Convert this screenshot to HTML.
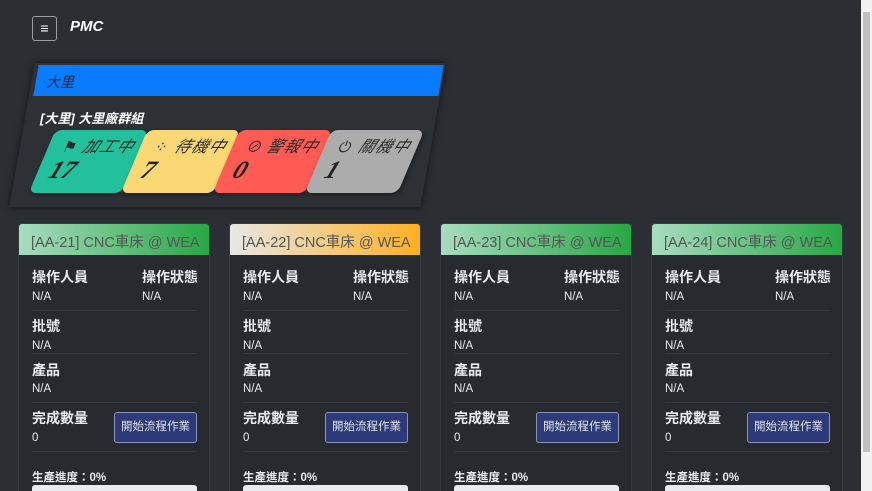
<!DOCTYPE html>
<html><head><meta charset="utf-8"><style>
*{box-sizing:border-box;margin:0;padding:0}
html,body{width:872px;height:491px;overflow:hidden}
body{background:#2b2f33;font-family:"Liberation Sans","Noto Sans CJK TC",sans-serif;color:#e9ecef;position:relative}
.abs{position:absolute}
.sb{position:absolute;right:0;top:0;width:11px;height:491px;background:#f1f1f1}
.sb:after{content:"";position:absolute;left:2px;top:12px;width:7px;height:440px;background:#c1c1c1}
.menu{left:32px;top:16px;width:25px;height:25px;border:1px solid #9a9da0;border-radius:3px;color:#fff;font-size:14px;text-align:center;line-height:22px}
.panel{left:22px;top:63px;width:411px;height:144px;background:#2d3135;transform:skewX(-10deg);box-shadow:0 0 8px rgba(0,0,0,.6)}
.ph{left:36px;top:65px;width:405px;height:31px;background:#0a7bff;transform:skewX(-10deg)}
.tile{top:130px;width:93px;height:63px;transform:skewX(-23deg);border-radius:7px;font-style:italic;box-shadow:2px 2px 4px rgba(0,0,0,.4);white-space:nowrap}
.tile .t{position:absolute;left:15px;top:3px;font-size:16px;color:#2a2a2a;letter-spacing:1px}
.tile .t i{display:inline-block;width:20px;font-style:normal;font-size:15px}
.tile .n{position:absolute;left:12px;top:27px;font:bold italic 25px "Liberation Serif",serif;color:#222}
.card{top:223px;width:192px;height:280px;background:#272b2f;border:1px solid #363a3e;border-radius:3px}
.ch{height:31px;padding:7px 12px;font-size:14.5px;color:#555;border-radius:3px 3px 0 0;white-space:nowrap}
.g{background:linear-gradient(90deg,#a8dcc0,#28a745)}
.y{background:linear-gradient(90deg,#e8e8e8,#ffb020)}
.cb{position:relative;height:250px}
.lb{position:absolute;font-size:14px;font-weight:bold;color:#e9ecef}
.v{position:absolute;font-size:11.5px;color:#e9ecef;white-space:nowrap}
.hr{position:absolute;left:13px;width:165px;height:1px;background:#34383c}
.btn{position:absolute;left:95px;top:157px;width:83px;height:31px;background:#2c3a7a;border:1px solid #8a93b8;border-radius:3px;font-size:11.5px;color:#e0e4f0;text-align:center;line-height:29px;white-space:nowrap}
.pb{position:absolute;left:13px;top:230px;width:165px;height:10px;background:#e9ecef;border-radius:3px}
</style></head><body>
<div class="abs menu">≡</div>
<div class="abs" style="left:70px;top:18px;font:bold italic 15px 'Liberation Sans',sans-serif;color:#fff">PMC</div>
<div class="abs panel"></div>
<div class="abs ph"></div>
<div class="abs" style="left:46px;top:72px;font-size:14px;font-style:italic;color:#1a2a40">大里</div>
<div class="abs" style="left:40px;top:108px;font-size:13px;font-weight:bold;font-style:italic;color:#fff">[大里] 大里廠群組</div>
<div class="abs tile" style="left:42px;background:#22c09c"><span class="t"><i>⚑</i>加工中</span><span class="n">17</span></div>
<div class="abs tile" style="left:134px;background:#fcd874"><span class="t"><i>⁘</i>待機中</span><span class="n">7</span></div>
<div class="abs tile" style="left:226px;background:#fd5b54"><span class="t"><i>⊘</i>警報中</span><span class="n">0</span></div>
<div class="abs tile" style="left:318px;background:#acacac"><span class="t"><i>⏻</i>關機中</span><span class="n">1</span></div>

<div class="abs card" style="left:18px"><div class="ch g">[AA-21] CNC車床 @ WEA</div><div class="cb">
<div class="lb" style="left:13px;top:12px">操作人員</div><div class="lb" style="left:123px;top:12px">操作狀態</div>
<div class="v" style="left:13px;top:36px">N/A</div><div class="v" style="left:123px;top:36px">N/A</div><div class="hr" style="top:55px"></div>
<div class="lb" style="left:13px;top:61px">批號</div><div class="v" style="left:13px;top:85px">N/A</div><div class="hr" style="top:98px"></div>
<div class="lb" style="left:13px;top:105px">產品</div><div class="v" style="left:13px;top:128px">N/A</div><div class="hr" style="top:147px"></div>
<div class="lb" style="left:13px;top:153px">完成數量</div><div class="v" style="left:13px;top:177px">0</div><div class="btn">開始流程作業</div><div class="hr" style="top:196px"></div>
<div class="v" style="left:13px;top:214px;font-weight:bold">生產進度：0%</div><div class="pb"></div></div></div>

<div class="abs card" style="left:229px"><div class="ch y">[AA-22] CNC車床 @ WEA</div><div class="cb">
<div class="lb" style="left:13px;top:12px">操作人員</div><div class="lb" style="left:123px;top:12px">操作狀態</div>
<div class="v" style="left:13px;top:36px">N/A</div><div class="v" style="left:123px;top:36px">N/A</div><div class="hr" style="top:55px"></div>
<div class="lb" style="left:13px;top:61px">批號</div><div class="v" style="left:13px;top:85px">N/A</div><div class="hr" style="top:98px"></div>
<div class="lb" style="left:13px;top:105px">產品</div><div class="v" style="left:13px;top:128px">N/A</div><div class="hr" style="top:147px"></div>
<div class="lb" style="left:13px;top:153px">完成數量</div><div class="v" style="left:13px;top:177px">0</div><div class="btn">開始流程作業</div><div class="hr" style="top:196px"></div>
<div class="v" style="left:13px;top:214px;font-weight:bold">生產進度：0%</div><div class="pb"></div></div></div>

<div class="abs card" style="left:440px"><div class="ch g">[AA-23] CNC車床 @ WEA</div><div class="cb">
<div class="lb" style="left:13px;top:12px">操作人員</div><div class="lb" style="left:123px;top:12px">操作狀態</div>
<div class="v" style="left:13px;top:36px">N/A</div><div class="v" style="left:123px;top:36px">N/A</div><div class="hr" style="top:55px"></div>
<div class="lb" style="left:13px;top:61px">批號</div><div class="v" style="left:13px;top:85px">N/A</div><div class="hr" style="top:98px"></div>
<div class="lb" style="left:13px;top:105px">產品</div><div class="v" style="left:13px;top:128px">N/A</div><div class="hr" style="top:147px"></div>
<div class="lb" style="left:13px;top:153px">完成數量</div><div class="v" style="left:13px;top:177px">0</div><div class="btn">開始流程作業</div><div class="hr" style="top:196px"></div>
<div class="v" style="left:13px;top:214px;font-weight:bold">生產進度：0%</div><div class="pb"></div></div></div>

<div class="abs card" style="left:651px"><div class="ch g">[AA-24] CNC車床 @ WEA</div><div class="cb">
<div class="lb" style="left:13px;top:12px">操作人員</div><div class="lb" style="left:123px;top:12px">操作狀態</div>
<div class="v" style="left:13px;top:36px">N/A</div><div class="v" style="left:123px;top:36px">N/A</div><div class="hr" style="top:55px"></div>
<div class="lb" style="left:13px;top:61px">批號</div><div class="v" style="left:13px;top:85px">N/A</div><div class="hr" style="top:98px"></div>
<div class="lb" style="left:13px;top:105px">產品</div><div class="v" style="left:13px;top:128px">N/A</div><div class="hr" style="top:147px"></div>
<div class="lb" style="left:13px;top:153px">完成數量</div><div class="v" style="left:13px;top:177px">0</div><div class="btn">開始流程作業</div><div class="hr" style="top:196px"></div>
<div class="v" style="left:13px;top:214px;font-weight:bold">生產進度：0%</div><div class="pb"></div></div></div>

<div class="sb"></div>
</body></html>
